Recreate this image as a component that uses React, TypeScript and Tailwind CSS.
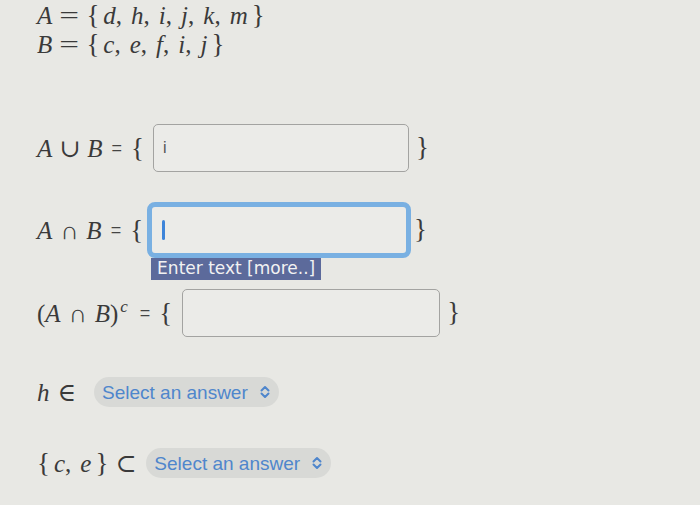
import { Fragment } from 'react';
import type { ReactNode } from 'react';

const serif = "font-['Liberation_Serif','DejaVu_Serif',serif]";

function V({ children }: { children: ReactNode }) {
  return <i className="italic">{children}</i>;
}

// wide math "=" like the TeX one
function MEq() {
  return <span className="mx-[10px] inline-block scale-x-[1.4]">=</span>;
}

function SetList({ items }: { items: string[] }) {
  return (
    <span>
      <span className="mr-[4px] text-[27px]">{'{'}</span>
      {items.map((it, i) => (
        <Fragment key={it}>
          <V>{it}</V>
          {i < items.length - 1 && <span className="mr-[9px]">,</span>}
        </Fragment>
      ))}
      <span className="ml-[4px] text-[27px]">{'}'}</span>
    </span>
  );
}

function Chevrons() {
  return (
    <svg width="12" height="14" viewBox="0 0 12 14" fill="none" stroke="#4f86cc" strokeWidth="2" strokeLinecap="round" strokeLinejoin="round">
      <path d="M2.5 5.5 6 2l3.5 3.5" />
      <path d="M2.5 8.5 6 12l3.5-3.5" />
    </svg>
  );
}

function SelectPill() {
  return (
    <div className="flex h-[30px] items-center gap-[11px] rounded-full bg-[#d8d9d6] pl-2 pr-2 font-['Liberation_Sans',Arial,sans-serif] text-[19px] leading-none text-[#4f86cc]">
      <span>Select an answer</span>
      <Chevrons />
    </div>
  );
}

function Brace({ children }: { children: ReactNode }) {
  return <span className={`${serif} text-[27px] leading-none text-[#3a3a3a]`}>{children}</span>;
}

function Eq() {
  return <span className="mx-[9px] font-['Liberation_Sans',Arial,sans-serif] text-[18px] leading-none text-[#444]">=</span>;
}

export default function App() {
  return (
    <div className="min-h-screen bg-[#e8e8e4] pl-[37px] pt-[1px] text-[#3a3a3a]">
      <div className={`${serif} text-[25px] leading-[29px]`}>
        <div>
          <V>A</V>
          <MEq />
          <SetList items={['d', 'h', 'i', 'j', 'k', 'm']} />
        </div>
        <div>
          <V>B</V>
          <MEq />
          <SetList items={['c', 'e', 'f', 'i', 'j']} />
        </div>
      </div>

      <div className="mt-[65px] flex h-[48px] items-center">
        <span className={`${serif} text-[25px] leading-none`}>
          <V>A</V>
          <span className="mx-[7px]">∪</span>
          <V>B</V>
        </span>
        <Eq />
        <Brace>{'{'}</Brace>
        <div className="ml-[9px] flex h-[48px] w-[256px] items-center rounded-[5px] border border-[#a3a3a1] bg-[#ebebe8] pl-[9px] font-['Liberation_Sans',Arial,sans-serif] text-[16px] text-[#555]">
          i
        </div>
        <span className="ml-[7px]">
          <Brace>{'}'}</Brace>
        </span>
      </div>

      <div className="mt-[30px] flex h-[56px] items-center">
        <span className={`${serif} text-[25px] leading-none`}>
          <V>A</V>
          <span className="mx-[8px]">∩</span>
          <V>B</V>
        </span>
        <Eq />
        <Brace>{'{'}</Brace>
        <div className="relative ml-[4px]">
          <div className="flex h-[56px] w-[264px] items-center rounded-[8px] border-[5px] border-[#79b0e2] bg-[#ebebe8]">
            <div className="ml-[10px] h-[20px] w-[3px] rounded-full bg-[#3d84d9]" />
          </div>
          <div className="absolute left-[4px] top-[56px] flex h-[22px] w-[170px] items-center bg-[#5c6a9b] pl-[6px] font-['DejaVu_Sans',sans-serif] text-[17px] text-[#f2f2f2]">
            Enter text [more..]
          </div>
        </div>
        <span className="ml-[3px]">
          <Brace>{'}'}</Brace>
        </span>
      </div>

      <div className="mt-[31px] flex h-[48px] items-center">
        <span className={`${serif} text-[25px] leading-none`}>
          (<V>A</V>
          <span className="mx-[8px]">∩</span>
          <V>B</V>)
          <span className="relative -top-[10px] ml-[2px] text-[17px]">
            <V>c</V>
          </span>
        </span>
        <span className="ml-[3px]">
          <Eq />
        </span>
        <Brace>{'{'}</Brace>
        <div className="ml-[10px] h-[48px] w-[258px] rounded-[5px] border border-[#a3a3a1] bg-[#ebebe8]" />
        <span className="ml-[7px]">
          <Brace>{'}'}</Brace>
        </span>
      </div>

      <div className="mt-[40px] flex h-[30px] items-center">
        <span className={`${serif} mr-[18px] text-[25px] leading-none`}>
          <V>h</V>
          <span className="ml-[8px]">∈</span>
        </span>
        <SelectPill />
      </div>

      <div className="mt-[41px] flex h-[30px] items-center">
        <span className={`${serif} mr-[10px] text-[25px] leading-none`}>
          <SetList items={['c', 'e']} />
          <span className="ml-[7px]">⊂</span>
        </span>
        <SelectPill />
      </div>
    </div>
  );
}
